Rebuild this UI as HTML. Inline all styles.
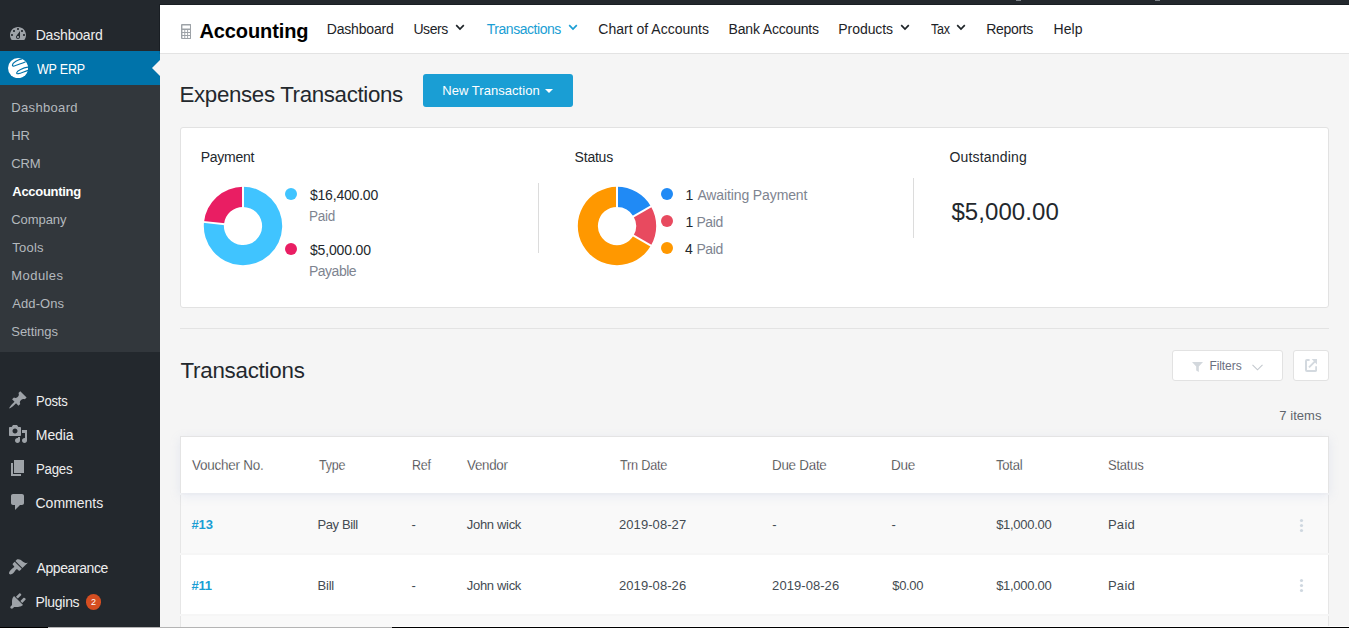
<!DOCTYPE html>
<html><head><meta charset="utf-8"><title>Expenses Transactions</title>
<style>
html,body{margin:0;padding:0}
body{width:1349px;height:628px;overflow:hidden;position:relative;background:#f5f5f5;font-family:"Liberation Sans",sans-serif}
.a{position:absolute;display:block}
.t{position:absolute;white-space:pre;line-height:1;transform-origin:0 0}
</style></head><body>
<!-- top admin bar remnant -->
<div class="a" style="left:0;top:0;width:1349px;height:5px;background:#23282d"></div>
<!-- sidebar -->
<div class="a" style="left:0;top:0;width:160px;height:628px;background:#23282d"></div>
<div class="a" style="left:0;top:51px;width:160px;height:34px;background:#0073aa"></div>
<div class="a" style="left:0;top:85px;width:160px;height:267px;background:#32373c"></div>
<div class="a" style="left:152px;top:60px;width:0;height:0;border:8px solid transparent;border-right-color:#f5f5f5;border-left-width:0"></div>
<svg class="a" style="left:8px;top:24px" width="20" height="20" viewBox="0 0 20 20"><path fill="#9ea3a8" d="M3.76 16h12.48c1.1-1.37 1.76-3.11 1.76-5 0-4.42-3.58-8-8-8s-8 3.58-8 8c0 1.89.66 3.63 1.76 5zM10 4c.55 0 1 .45 1 1s-.45 1-1 1-1-.45-1-1 .45-1 1-1zM6 6c.55 0 1 .45 1 1s-.45 1-1 1-1-.45-1-1 .45-1 1-1zm8 0c.55 0 1 .45 1 1s-.45 1-1 1-1-.45-1-1 .45-1 1-1zm-5.37 5.55L12 7v6c0 1.1-.9 2-2 2s-2-.9-2-2c0-.57.24-1.08.63-1.45zM4 10c.55 0 1 .45 1 1s-.45 1-1 1-1-.45-1-1 .45-1 1-1zm12 0c.55 0 1 .45 1 1s-.45 1-1 1-1-.45-1-1 .45-1 1-1zm-5 3c0-.55-.45-1-1-1s-1 .45-1 1 .45 1 1 1 1-.45 1-1z"/></svg><svg class="a" style="left:8px;top:390px" width="20" height="20" viewBox="0 0 20 20"><path fill="#9ea3a8" d="M10.44 3.02l1.82-1.82 6.36 6.35-1.83 1.82c-1.05-.68-2.48-.57-3.41.36l-.75.75c-.92.93-1.04 2.35-.35 3.41l-1.83 1.82-2.41-2.41-2.8 2.79c-.42.42-3.38 2.71-3.8 2.29s1.86-3.39 2.28-3.81l2.79-2.79L4.1 9.36l1.83-1.82c1.05.69 2.48.57 3.4-.36l.75-.75c.93-.92 1.05-2.35.36-3.41z"/></svg><svg class="a" style="left:8px;top:424px" width="20" height="20" viewBox="0 0 20 20"><path fill="#9ea3a8" d="M13 11V4c0-.55-.45-1-1-1h-1.67L9 1H5L3.67 3H2c-.55 0-1 .45-1 1v7c0 .55.45 1 1 1h10c.55 0 1-.45 1-1zM7 4.5c1.38 0 2.5 1.12 2.5 2.5S8.38 9.5 7 9.5 4.5 8.38 4.5 7 5.62 4.5 7 4.5zM14 6h5v10.5c0 1.38-1.12 2.5-2.5 2.5S14 17.88 14 16.5s1.12-2.5 2.5-2.5c.17 0 .34.02.5.05V9h-3V6zm-4 8.05V13h2v3.5c0 1.38-1.12 2.5-2.5 2.5S7 17.88 7 16.5 8.12 14 9.5 14c.17 0 .34.02.5.05z"/></svg><svg class="a" style="left:8px;top:458px" width="20" height="20" viewBox="0 0 20 20"><path fill="#9ea3a8" d="M6 15V2h10v13H6zm-1 1h8v2H3V5h2v11z"/></svg><svg class="a" style="left:8px;top:492px" width="20" height="20" viewBox="0 0 20 20"><path fill="#9ea3a8" d="M5 2h9c1.1 0 2 .9 2 2v7c0 1.1-.9 2-2 2h-2l-5 5v-5H5c-1.1 0-2-.9-2-2V4c0-1.1.9-2 2-2z"/></svg><svg class="a" style="left:8px;top:557px" width="20" height="20" viewBox="0 0 20 20"><path fill="#9ea3a8" d="M14.48 11.06L7.41 3.99l1.5-1.5c.5-.56 2.3-.47 3.51.32 1.21.8 1.43 1.28 2.91 2.1 1.18.64 2.45 1.26 4.45.85zm-.71.71L6.7 4.7 4.93 6.47c-.39.39-.39 1.02 0 1.41l1.06 1.06c.39.39.39 1.03 0 1.42-.6.6-1.43 1.11-2.21 1.69-.35.26-.7.53-1.01.84C1.43 14.23.4 16.08 1.4 17.07c.99 1 2.84-.03 4.18-1.36.31-.31.58-.66.85-1.02.57-.78 1.08-1.61 1.69-2.21.39-.39 1.02-.39 1.41 0l1.06 1.06c.39.39 1.02.39 1.41 0z"/></svg><svg class="a" style="left:8px;top:591px" width="20" height="20" viewBox="0 0 20 20"><path fill="#9ea3a8" d="M13.11 4.36L9.87 7.6 8 5.73l3.24-3.24c.35-.34 1.05-.2 1.56.32.52.51.66 1.21.31 1.55zm-8 1.77l.91-1.12 9.01 9.01-1.19.84c-.71.71-2.63 1.16-3.82 1.16H6.14L4.9 17.26c-.59.59-1.54.59-2.12 0-.59-.58-.59-1.53 0-2.12l1.24-1.24v-3.88c0-1.13.4-3.19 1.09-3.89zm7.26 3.97l3.24-3.24c.34-.35 1.04-.21 1.55.31.52.51.66 1.21.31 1.55l-3.24 3.25z"/></svg>
<!-- WP ERP logo -->
<svg class="a" style="left:8px;top:57.8px" width="20.2" height="20.2" viewBox="0 0 20 20"><circle cx="10" cy="10" r="10" fill="#fff"/><path d="M13.8 0.9C10 1.600 4.600 4.600 4.400 7C4.300 9.400 8.500 7 17 3.900M19.800 9.100C15 9.800 9 12.500 8.600 14.600C8.400 17 13 14.600 19.800 12.300" fill="none" stroke="#0073aa" stroke-width="1.15" stroke-linecap="round"/></svg>
<!-- plugins badge -->
<div class="a" style="left:86px;top:594px;width:15px;height:16px;border-radius:8px;background:#d54e21"></div>
<span class="t" style="left:91px;top:598px;font-size:9px;color:#fff">2</span>
<!-- top nav -->
<div class="a" style="left:160px;top:5px;width:1189px;height:48px;background:#fff;border-bottom:1px solid #e3e3e3"></div>
<svg class="a" style="left:181px;top:23.9px" width="10.4" height="15" viewBox="0 0 11 15" preserveAspectRatio="none"><rect x="0" y="0" width="11" height="15" rx="1" fill="#9da2a7"/><rect x="1.5" y="1.5" width="8" height="3" fill="#fff"/>
<g fill="#fff"><rect x="1.5" y="6" width="2" height="2"/><rect x="4.5" y="6" width="2" height="2"/><rect x="7.5" y="6" width="2" height="2"/><rect x="1.5" y="9" width="2" height="2"/><rect x="4.5" y="9" width="2" height="2"/><rect x="7.5" y="9" width="2" height="2"/><rect x="1.5" y="12" width="2" height="2"/><rect x="4.5" y="12" width="2" height="2"/><rect x="7.5" y="12" width="2" height="2"/></g></svg>
<svg class="a" style="left:455px;top:24px" width="10" height="7" viewBox="0 0 10 7"><path d="M1.2 1.2L5 5L8.8 1.2" fill="none" stroke="#1d2327" stroke-width="1.7"/></svg><svg class="a" style="left:567.5px;top:24px" width="10" height="7" viewBox="0 0 10 7"><path d="M1.2 1.2L5 5L8.8 1.2" fill="none" stroke="#1a9ed4" stroke-width="1.7"/></svg><svg class="a" style="left:900px;top:24px" width="10" height="7" viewBox="0 0 10 7"><path d="M1.2 1.2L5 5L8.8 1.2" fill="none" stroke="#1d2327" stroke-width="1.7"/></svg><svg class="a" style="left:956px;top:24px" width="10" height="7" viewBox="0 0 10 7"><path d="M1.2 1.2L5 5L8.8 1.2" fill="none" stroke="#1d2327" stroke-width="1.7"/></svg>
<!-- New Transaction button -->
<div class="a" style="left:423px;top:74px;width:150px;height:33px;border-radius:3px;background:#1a9ed4"></div>
<div class="a" style="left:544.8px;top:89px;width:0;height:0;border:4px solid transparent;border-top-color:#fff;border-bottom-width:0"></div>
<!-- stats card -->
<div class="a" style="left:180px;top:127px;width:1147px;height:179px;background:#fff;border:1px solid #e2e2e2;border-radius:3px"></div>
<svg class="a" style="left:0;top:0" width="1349" height="628" viewBox="0 0 1349 628"><path d="M243.00 186.80A39.2 39.2 0 1 1 204.01 221.97L224.00 224.04A19.1 19.1 0 1 0 243.00 206.90Z" fill="#40c4ff"/><path d="M204.01 221.97A39.2 39.2 0 0 1 243.00 186.80L243.00 206.90A19.1 19.1 0 0 0 224.00 224.04Z" fill="#e91e63"/><path d="M243.00 207.90L243.00 185.80" stroke="#fff" stroke-width="2" fill="none"/><path d="M225.00 224.14L203.01 221.87" stroke="#fff" stroke-width="2" fill="none"/><path d="M617.00 186.80A39.2 39.2 0 0 1 650.95 206.40L633.54 216.45A19.1 19.1 0 0 0 617.00 206.90Z" fill="#208af5"/><path d="M650.95 206.40A39.2 39.2 0 0 1 650.95 245.60L633.54 235.55A19.1 19.1 0 0 0 633.54 216.45Z" fill="#e84a5f"/><path d="M650.95 245.60A39.2 39.2 0 1 1 617.00 186.80L617.00 206.90A19.1 19.1 0 1 0 633.54 235.55Z" fill="#ff9800"/><path d="M617.00 207.90L617.00 185.80" stroke="#fff" stroke-width="2" fill="none"/><path d="M632.68 216.95L651.81 205.90" stroke="#fff" stroke-width="2" fill="none"/><path d="M632.68 235.05L651.81 246.10" stroke="#fff" stroke-width="2" fill="none"/>
<circle cx="291" cy="194" r="6" fill="#40c4ff"/><circle cx="291" cy="249" r="6" fill="#e91e63"/>
<circle cx="667" cy="194" r="6" fill="#208af5"/><circle cx="667" cy="221" r="6" fill="#e84a5f"/><circle cx="667" cy="248" r="6" fill="#ff9800"/>
</svg>
<div class="a" style="left:538px;top:183px;width:1px;height:70px;background:#dcdcdc"></div>
<div class="a" style="left:913px;top:178px;width:1px;height:60px;background:#dcdcdc"></div>
<!-- hr -->
<div class="a" style="left:180px;top:328px;width:1149px;height:1px;background:#e3e3e3"></div>
<!-- filter buttons -->
<div class="a" style="left:1172px;top:350px;width:109px;height:29px;background:#fff;border:1px solid #e2e2e2;border-radius:3px"></div>
<div class="a" style="left:1293px;top:350px;width:34px;height:29px;background:#fff;border:1px solid #e2e2e2;border-radius:3px"></div>
<svg class="a" style="left:1192px;top:362px" width="11" height="10" viewBox="0 0 11 10"><path d="M0 0H11L6.8 4.6V10L4.2 8.4V4.6Z" fill="#d3d8dd"/></svg>
<svg class="a" style="left:1252px;top:364px" width="11" height="7" viewBox="0 0 11 7"><path d="M0.5 0.8L5.5 5.8L10.5 0.8" fill="none" stroke="#c3c8ce" stroke-width="1.1"/></svg>
<svg class="a" style="left:1304.7px;top:359px" width="12.4" height="13" viewBox="0 0 12.4 13"><path d="M4.600 1H2A1 1 0 0 0 1 2V11A1 1 0 0 0 2 12H10.200A1 1 0 0 0 11.200 11V7.200" fill="none" stroke="#d3d9df" stroke-width="2"/><path d="M6.600 0H12.400V5.800Z" fill="#d3d9df"/><path d="M4 8.400L10 2.400" stroke="#d3d9df" stroke-width="2" fill="none"/></svg>
<!-- table -->
<div class="a" style="left:180px;top:436px;width:1149px;height:200px;background:#f6f6f6"></div>
<div class="a" style="left:180px;top:495px;width:1147px;height:58px;background:#f9f9f9;border-left:1px solid #e6e6e6;border-right:1px solid #e6e6e6"></div>
<div class="a" style="left:180px;top:555px;width:1147px;height:59px;background:#fff;border-left:1px solid #e6e6e6;border-right:1px solid #e6e6e6"></div>
<div class="a" style="left:180px;top:616px;width:1147px;height:20px;background:#f9f9f9;border-left:1px solid #e6e6e6;border-right:1px solid #e6e6e6"></div>
<div class="a" style="left:180px;top:436px;width:1147px;height:56px;background:#fff;border:1px solid #e4e4e4;border-bottom:0;box-shadow:0 3px 10px rgba(140,160,210,.17)"></div>
<svg class="a" style="left:1299px;top:518px" width="5" height="80" viewBox="0 0 5 80"><g fill="#cfd8e0"><circle cx="2.5" cy="2.500" r="1.6"/><circle cx="2.500" cy="7.500" r="1.6"/><circle cx="2.500" cy="12.500" r="1.6"/><circle cx="2.500" cy="62.500" r="1.6"/><circle cx="2.500" cy="67.500" r="1.6"/><circle cx="2.500" cy="72.500" r="1.6"/></g></svg>
<span class="t" style="left:35.7px;top:28.15px;font-size:14px;letter-spacing:-0.18px;color:#eeeeee">Dashboard</span>
<span class="t" style="left:36.7px;top:62.15px;font-size:14px;letter-spacing:-0.25px;transform:scaleX(0.8948);color:#ffffff">WP ERP</span>
<span class="t" style="left:35.87px;top:394.15px;font-size:14px;letter-spacing:-0.25px;transform:scaleX(0.9303);color:#eeeeee">Posts</span>
<span class="t" style="left:35.8px;top:428.15px;font-size:14px;letter-spacing:-0.07px;color:#eeeeee">Media</span>
<span class="t" style="left:35.86px;top:462.15px;font-size:14px;letter-spacing:-0.25px;transform:scaleX(0.9432);color:#eeeeee">Pages</span>
<span class="t" style="left:35.5px;top:496.15px;font-size:14px;letter-spacing:0.01px;color:#eeeeee">Comments</span>
<span class="t" style="left:36.5px;top:561.15px;font-size:14px;letter-spacing:-0.41px;color:#eeeeee">Appearance</span>
<span class="t" style="left:35.5px;top:595.15px;font-size:14px;letter-spacing:-0.3px;color:#eeeeee">Plugins</span>
<span class="t" style="left:11.3px;top:100.7px;font-size:13px;letter-spacing:0.33px;color:#b4b9be">Dashboard</span>
<span class="t" style="left:11.3px;top:128.7px;font-size:13px;letter-spacing:-0.3px;color:#b4b9be">HR</span>
<span class="t" style="left:11.3px;top:156.7px;font-size:13px;letter-spacing:-0.1px;color:#b4b9be">CRM</span>
<span class="t" style="left:12.3px;top:184.7px;font-size:13px;font-weight:700;letter-spacing:-0.29px;color:#ffffff">Accounting</span>
<span class="t" style="left:11.3px;top:212.7px;font-size:13px;letter-spacing:-0.08px;color:#b4b9be">Company</span>
<span class="t" style="left:12.3px;top:240.7px;font-size:13px;letter-spacing:0.23px;color:#b4b9be">Tools</span>
<span class="t" style="left:11.3px;top:268.7px;font-size:13px;letter-spacing:0.43px;color:#b4b9be">Modules</span>
<span class="t" style="left:12.3px;top:296.7px;font-size:13px;letter-spacing:0.08px;color:#b4b9be">Add-Ons</span>
<span class="t" style="left:11.3px;top:324.7px;font-size:13px;letter-spacing:-0.04px;color:#b4b9be">Settings</span>
<span class="t" style="left:199.4px;top:20.77px;font-size:20px;font-weight:700;letter-spacing:-0.09px;color:#000000">Accounting</span>
<span class="t" style="left:326.8px;top:21.95px;font-size:14px;letter-spacing:-0.19px;color:#1d2327">Dashboard</span>
<span class="t" style="left:413.4px;top:21.95px;font-size:14px;letter-spacing:-0.4px;color:#1d2327">Users</span>
<span class="t" style="left:486.7px;top:21.95px;font-size:14px;letter-spacing:-0.45px;color:#1a9ed4">Transactions</span>
<span class="t" style="left:598.3px;top:21.95px;font-size:14px;letter-spacing:0.01px;color:#1d2327">Chart of Accounts</span>
<span class="t" style="left:728.6px;top:21.95px;font-size:14px;letter-spacing:-0.18px;color:#1d2327">Bank Accounts</span>
<span class="t" style="left:838.3px;top:21.95px;font-size:14px;letter-spacing:-0.06px;color:#1d2327">Products</span>
<span class="t" style="left:931.0px;top:21.95px;font-size:14px;letter-spacing:-0.25px;transform:scaleX(0.8976);color:#1d2327">Tax</span>
<span class="t" style="left:986.3px;top:21.95px;font-size:14px;letter-spacing:-0.33px;color:#1d2327">Reports</span>
<span class="t" style="left:1053.4px;top:21.95px;font-size:14px;letter-spacing:0.13px;color:#1d2327">Help</span>
<span class="t" style="left:179.5px;top:83.62px;font-size:22.3px;letter-spacing:-0.34px;color:#23282d">Expenses Transactions</span>
<span class="t" style="left:442.3px;top:84.2px;font-size:13px;letter-spacing:0.04px;color:#ffffff">New Transaction</span>
<span class="t" style="left:200.7px;top:150.15px;font-size:14px;letter-spacing:-0.25px;color:#23282d">Payment</span>
<span class="t" style="left:574.6px;top:149.95px;font-size:14px;letter-spacing:-0.22px;color:#23282d">Status</span>
<span class="t" style="left:949.4px;top:150.05px;font-size:14px;letter-spacing:0.2px;color:#23282d">Outstanding</span>
<span class="t" style="left:309.9px;top:187.75px;font-size:14px;letter-spacing:-0.19px;color:#23282d">$16,400.00</span>
<span class="t" style="left:308.93px;top:209.05px;font-size:14px;letter-spacing:-0.25px;transform:scaleX(0.9663);color:#7e8490">Paid</span>
<span class="t" style="left:309.9px;top:242.85px;font-size:14px;letter-spacing:-0.15px;color:#23282d">$5,000.00</span>
<span class="t" style="left:308.9px;top:264.15px;font-size:14px;letter-spacing:-0.48px;color:#7e8490">Payable</span>
<span class="t" style="left:685.5px;top:188.15px;font-size:14px;color:#23282d">1</span>
<span class="t" style="left:697.4px;top:188.15px;font-size:14px;letter-spacing:-0.12px;color:#7e8490">Awaiting Payment</span>
<span class="t" style="left:685.5px;top:214.65px;font-size:14px;color:#23282d">1</span>
<span class="t" style="left:696.4px;top:214.65px;font-size:14px;letter-spacing:-0.37px;color:#7e8490">Paid</span>
<span class="t" style="left:685.0px;top:242.05px;font-size:14px;color:#23282d">4</span>
<span class="t" style="left:696.4px;top:242.05px;font-size:14px;letter-spacing:-0.37px;color:#7e8490">Paid</span>
<span class="t" style="left:951.4px;top:199.58px;font-size:24px;letter-spacing:0.08px;color:#23282d">$5,000.00</span>
<span class="t" style="left:180.5px;top:359.62px;font-size:22.3px;letter-spacing:-0.23px;color:#23282d">Transactions</span>
<span class="t" style="left:1209.4px;top:359.64px;font-size:12px;letter-spacing:-0.07px;color:#6b7080">Filters</span>
<span class="t" style="left:1279.3px;top:408.8px;font-size:13px;letter-spacing:0.05px;color:#5f656d">7 items</span>
<span class="t" style="left:191.6px;top:458.35px;font-size:14px;-webkit-text-stroke:0.3px #fff;letter-spacing:-0.25px;transform:scaleX(0.9619);color:#1c2126">Voucher No.</span>
<span class="t" style="left:318.5px;top:458.35px;font-size:14px;-webkit-text-stroke:0.3px #fff;letter-spacing:-0.25px;transform:scaleX(0.8923);color:#1c2126">Type</span>
<span class="t" style="left:411.51px;top:458.35px;font-size:14px;-webkit-text-stroke:0.3px #fff;letter-spacing:-0.25px;transform:scaleX(0.8878);color:#1c2126">Ref</span>
<span class="t" style="left:466.8px;top:458.35px;font-size:14px;-webkit-text-stroke:0.3px #fff;letter-spacing:-0.25px;transform:scaleX(0.9497);color:#1c2126">Vendor</span>
<span class="t" style="left:620.0px;top:458.35px;font-size:14px;-webkit-text-stroke:0.3px #fff;letter-spacing:-0.25px;transform:scaleX(0.9072);color:#1c2126">Trn Date</span>
<span class="t" style="left:772.15px;top:458.35px;font-size:14px;-webkit-text-stroke:0.3px #fff;letter-spacing:-0.25px;transform:scaleX(0.9547);color:#1c2126">Due Date</span>
<span class="t" style="left:891.33px;top:458.35px;font-size:14px;-webkit-text-stroke:0.3px #fff;letter-spacing:-0.25px;transform:scaleX(0.966);color:#1c2126">Due</span>
<span class="t" style="left:996.2px;top:458.35px;font-size:14px;-webkit-text-stroke:0.3px #fff;letter-spacing:-0.25px;transform:scaleX(0.9357);color:#1c2126">Total</span>
<span class="t" style="left:1107.97px;top:458.35px;font-size:14px;-webkit-text-stroke:0.3px #fff;letter-spacing:-0.25px;transform:scaleX(0.9279);color:#1c2126">Status</span>
<span class="t" style="left:191.6px;top:518.0px;font-size:13px;font-weight:700;letter-spacing:-0.2px;color:#1a9ed4">#13</span>
<span class="t" style="left:317.5px;top:518.0px;font-size:13px;letter-spacing:-0.39px;color:#444b52">Pay Bill</span>
<span class="t" style="left:411.6px;top:518.0px;font-size:13px;color:#444b52">-</span>
<span class="t" style="left:466.8px;top:518.0px;font-size:13px;letter-spacing:-0.32px;color:#444b52">John wick</span>
<span class="t" style="left:619.0px;top:518.0px;font-size:13px;letter-spacing:0.07px;color:#444b52">2019-08-27</span>
<span class="t" style="left:772.3px;top:518.0px;font-size:13px;color:#444b52">-</span>
<span class="t" style="left:891.5px;top:518.0px;font-size:13px;color:#444b52">-</span>
<span class="t" style="left:996.2px;top:518.0px;font-size:13px;letter-spacing:-0.3px;color:#444b52">$1,000.00</span>
<span class="t" style="left:1107.9px;top:518.0px;font-size:13px;letter-spacing:0.3px;color:#444b52">Paid</span>
<span class="t" style="left:191.6px;top:579.1px;font-size:13px;font-weight:700;letter-spacing:-0.3px;color:#1a9ed4">#11</span>
<span class="t" style="left:317.5px;top:579.1px;font-size:13px;letter-spacing:-0.2px;color:#444b52">Bill</span>
<span class="t" style="left:411.6px;top:579.1px;font-size:13px;color:#444b52">-</span>
<span class="t" style="left:466.8px;top:579.1px;font-size:13px;letter-spacing:-0.32px;color:#444b52">John wick</span>
<span class="t" style="left:619.0px;top:579.1px;font-size:13px;letter-spacing:0.07px;color:#444b52">2019-08-26</span>
<span class="t" style="left:772.1px;top:579.1px;font-size:13px;letter-spacing:0.06px;color:#444b52">2019-08-26</span>
<span class="t" style="left:892.3px;top:579.1px;font-size:13px;letter-spacing:-0.35px;color:#444b52">$0.00</span>
<span class="t" style="left:996.2px;top:579.1px;font-size:13px;letter-spacing:-0.3px;color:#444b52">$1,000.00</span>
<span class="t" style="left:1107.9px;top:579.1px;font-size:13px;letter-spacing:0.3px;color:#444b52">Paid</span>

<!-- edge details -->
<div class="a" style="left:160px;top:4px;width:1189px;height:1px;background:#191e23"></div>
<div class="a" style="left:159px;top:4px;width:1px;height:47px;background:#191e23"></div>
<div class="a" style="left:159px;top:51px;width:1px;height:3px;background:#00679a"></div>
<div class="a" style="left:1016px;top:0;width:5px;height:1px;background:#7d8288"></div>
<div class="a" style="left:1155px;top:0;width:5px;height:1px;background:#7d8288"></div>
<div class="a" style="left:392px;top:626px;width:957px;height:1px;background:#fff"></div>
<div class="a" style="left:0;top:627px;width:48px;height:1px;background:#000"></div>
<!-- bottom edge strip -->
<div class="a" style="left:48px;top:627px;width:344px;height:1px;background:#b4b4b4"></div>
<div class="a" style="left:392px;top:627px;width:957px;height:1px;background:#000"></div>
</body></html>
